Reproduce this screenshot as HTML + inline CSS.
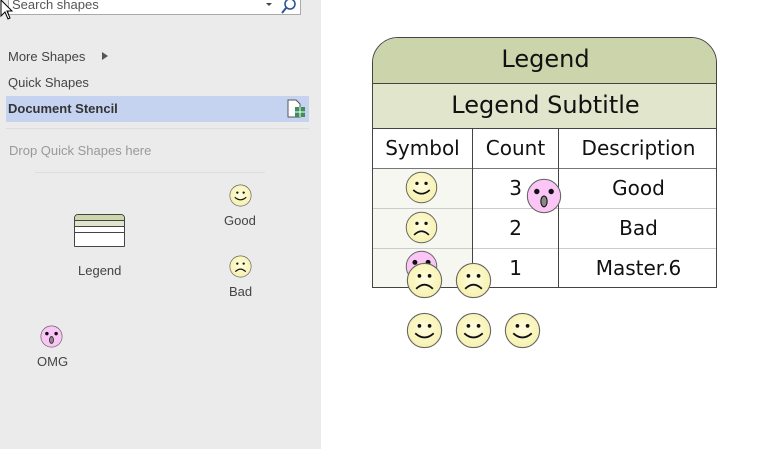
<!DOCTYPE html>
<html><head><meta charset="utf-8"><style>
*{margin:0;padding:0;box-sizing:border-box}
body{width:768px;height:449px;overflow:hidden;background:#fff;font-family:"Liberation Sans",sans-serif;position:relative}
#side{position:absolute;left:0;top:0;width:321px;height:449px;background:#ebebeb}
.t{position:absolute;font-size:13px;color:#444;white-space:nowrap}
.a{position:absolute}
#lg{position:absolute;left:372px;top:37px;width:345px;height:251px;border:1px solid #444;border-radius:26px 26px 0 0;overflow:hidden;font-family:"DejaVu Sans","Liberation Sans",sans-serif;color:#111}
.c{position:absolute;text-align:center;font-size:20px}
</style></head><body>
<svg width="0" height="0" style="position:absolute">
<defs>
<radialGradient id="y" cx="50%" cy="45%" r="60%"><stop offset="0" stop-color="#fffde0"/><stop offset="1" stop-color="#f6f0a8"/></radialGradient>
<symbol id="hp" viewBox="0 0 40 40"><circle cx="20" cy="20" r="18.5" fill="url(#y)" stroke="#666" stroke-width="1.2"/><circle cx="14.5" cy="15" r="2" fill="#111"/><circle cx="25.5" cy="15" r="2" fill="#111"/><path d="M10 23 Q20 32 30 23" fill="none" stroke="#111" stroke-width="2"/></symbol>
<symbol id="sd" viewBox="0 0 40 40"><circle cx="20" cy="20" r="18.5" fill="url(#y)" stroke="#666" stroke-width="1.2"/><circle cx="14.5" cy="15" r="2" fill="#111"/><circle cx="25.5" cy="15" r="2" fill="#111"/><path d="M11 29 Q20 20 29 29" fill="none" stroke="#111" stroke-width="2"/></symbol>
<symbol id="om" viewBox="0 0 40 40"><circle cx="20" cy="20" r="18.5" fill="#fbc6f6" stroke="#666" stroke-width="1.2"/><circle cx="12" cy="15" r="3" fill="#111"/><circle cx="28" cy="15" r="3" fill="#111"/><ellipse cx="20" cy="26" rx="3.5" ry="6" fill="#888" stroke="#111" stroke-width="1.2"/></symbol>
</defs></svg>
<div id="side">
<div class="a" style="left:8px;top:-2px;width:293px;height:17px;background:#fff;border:1px solid #aaa"></div>
<div class="t" style="left:12px;top:-3px;color:#555;font-size:13px">Search shapes</div>
<div class="a" style="left:266px;top:3px;border:3px solid transparent;border-top:3px solid #444"></div>
<svg class="a" style="left:280px;top:0" width="18" height="14"><circle cx="10" cy="4" r="5" fill="none" stroke="#2b5797" stroke-width="1.6"/><path d="M6 8 L2 13" stroke="#2b5797" stroke-width="2"/></svg>
<svg class="a" style="left:0;top:0" width="14" height="22"><path d="M1 0 L1 16 L5 12 L8 19 L10 18 L7 11 L12 11 Z" fill="#fff" stroke="#000" stroke-width="1"/></svg>
<div class="t" style="left:8px;top:49px">More Shapes</div>
<div class="a" style="left:102px;top:52px;border:4px solid transparent;border-left:6px solid #555;border-right:0;height:0"></div>
<div class="t" style="left:8px;top:75px">Quick Shapes</div>
<div class="a" style="left:6px;top:96px;width:303px;height:26px;background:#c5d3f1"></div>
<div class="t" style="left:8px;top:101px;font-weight:bold;color:#333">Document Stencil</div>
<svg class="a" style="left:287px;top:99px" width="22" height="20"><path d="M1 1 H9 L13 5 V18 H1 Z" fill="#fff" stroke="#555"/><rect x="8" y="8" width="10" height="10" fill="#3f8f5b"/><path d="M13 8 V18 M8 13 H18" stroke="#fff"/></svg>
<div class="a" style="left:6px;top:128px;width:303px;height:1px;background:#ddd"></div>
<div class="t" style="left:9px;top:143px;color:#999">Drop Quick Shapes here</div>
<div class="a" style="left:35px;top:172px;width:230px;height:1px;background:#ddd"></div>
<div class="a" style="left:74px;top:214px;width:51px;height:33px;border:1px solid #444;border-radius:4px 4px 1px 1px;background:#fff;overflow:hidden">
<div style="height:6px;background:#cdd5ad;border-bottom:1px solid #444"></div><div style="height:6px;background:#e0e6cd;border-bottom:1px solid #444"></div><div style="height:6px;border-bottom:1px solid #444"></div></div>
<div class="t" style="left:78px;top:263px">Legend</div>
<svg class="a" style="left:229px;top:184px" width="23" height="23"><use href="#hp"/></svg>
<div class="t" style="left:224px;top:213px">Good</div>
<svg class="a" style="left:229px;top:255px" width="23" height="23"><use href="#sd"/></svg>
<div class="t" style="left:229px;top:284px">Bad</div>
<svg class="a" style="left:40px;top:325px" width="23" height="23"><use href="#om"/></svg>
<div class="t" style="left:37px;top:354px">OMG</div>
</div>
<div id="lg">
<div class="a" style="left:0;top:0;width:345px;height:46px;background:#ccd4ab;border-bottom:1px solid #444"></div>
<div class="a" style="left:0;top:46px;width:345px;height:45px;background:#e0e5cc;border-bottom:1px solid #444"></div>
<div class="a" style="left:0;top:130px;width:100px;height:120px;background:#f6f7f1"></div>
<div class="a" style="left:0;top:130px;width:345px;height:1px;background:#777"></div>
<div class="a" style="left:0;top:170px;width:345px;height:1px;background:#ccc"></div>
<div class="a" style="left:0;top:210px;width:345px;height:1px;background:#ccc"></div>
<div class="a" style="left:99px;top:91px;width:1px;height:160px;background:#444"></div>
<div class="a" style="left:185px;top:91px;width:1px;height:160px;background:#444"></div>
<div class="c" style="left:0;top:7px;width:345px;font-size:24px">Legend</div>
<div class="c" style="left:0;top:53px;width:345px;font-size:24px">Legend Subtitle</div>
<div class="c" style="left:0;top:98px;width:99px">Symbol</div>
<div class="c" style="left:100px;top:98px;width:85px">Count</div>
<div class="c" style="left:186px;top:98px;width:159px">Description</div>
<div class="c" style="left:100px;top:138px;width:85px;text-align:right;padding-right:36px">3</div>
<div class="c" style="left:100px;top:178px;width:85px;text-align:right;padding-right:36px">2</div>
<div class="c" style="left:100px;top:218px;width:85px;text-align:right;padding-right:36px">1</div>
<div class="c" style="left:186px;top:138px;width:159px">Good</div>
<div class="c" style="left:186px;top:178px;width:159px">Bad</div>
<div class="c" style="left:186px;top:218px;width:159px">Master.6</div>
</div>
<svg class="a" style="left:405px;top:171px" width="33" height="33"><use href="#hp"/></svg>
<svg class="a" style="left:405px;top:211px" width="33" height="33"><use href="#sd"/></svg>
<svg class="a" style="left:405px;top:250px" width="33" height="33"><use href="#om"/></svg>
<svg class="a" style="left:526px;top:178px" width="36" height="36"><use href="#om"/></svg>
<svg class="a" style="left:406px;top:262px" width="37" height="37"><use href="#sd"/></svg>
<svg class="a" style="left:455px;top:262px" width="37" height="37"><use href="#sd"/></svg>
<svg class="a" style="left:406px;top:312px" width="37" height="37"><use href="#hp"/></svg>
<svg class="a" style="left:455px;top:312px" width="37" height="37"><use href="#hp"/></svg>
<svg class="a" style="left:504px;top:312px" width="37" height="37"><use href="#hp"/></svg>
</body></html>
